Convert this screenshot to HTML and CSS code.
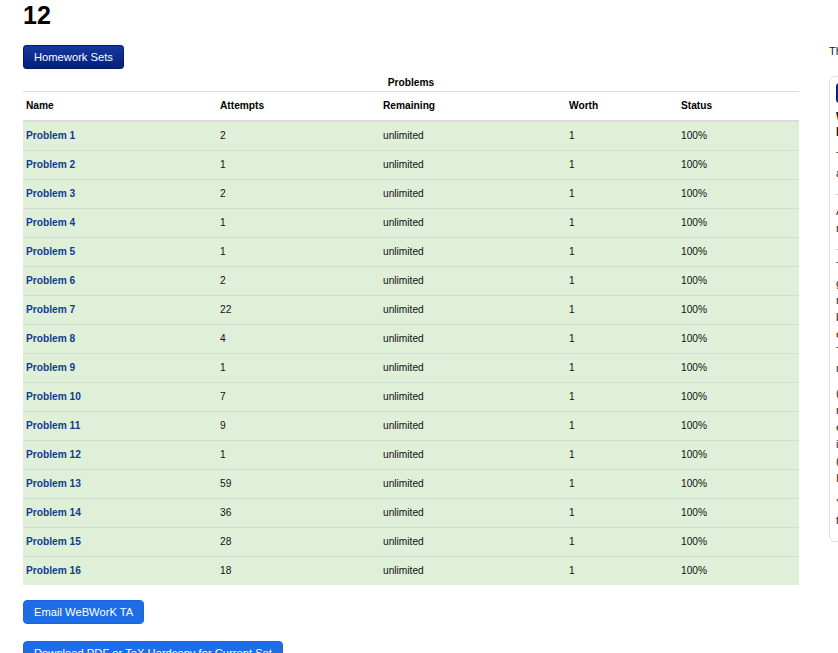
FILE: index.html
```html
<!DOCTYPE html>
<html lang="en">
<head>
<meta charset="utf-8">
<title>Set 12</title>
<link rel="stylesheet" href="styles.css">
</head>
<body>
<div class="page">
  <main class="main">
    <h1 class="set-title">12</h1>
    <div class="btn-row">
      <a class="btn btn-dark" href="#">Homework Sets</a>
    </div>
    <table class="problems">
      <caption>Problems</caption>
      <colgroup>
        <col class="c-name"><col class="c-att"><col class="c-rem"><col class="c-worth"><col class="c-status">
      </colgroup>
      <thead>
        <tr><th>Name</th><th>Attempts</th><th>Remaining</th><th>Worth</th><th>Status</th></tr>
      </thead>
      <tbody>
        <tr><td><a href="#">Problem 1</a></td><td>2</td><td>unlimited</td><td>1</td><td>100%</td></tr>
        <tr><td><a href="#">Problem 2</a></td><td>1</td><td>unlimited</td><td>1</td><td>100%</td></tr>
        <tr><td><a href="#">Problem 3</a></td><td>2</td><td>unlimited</td><td>1</td><td>100%</td></tr>
        <tr><td><a href="#">Problem 4</a></td><td>1</td><td>unlimited</td><td>1</td><td>100%</td></tr>
        <tr><td><a href="#">Problem 5</a></td><td>1</td><td>unlimited</td><td>1</td><td>100%</td></tr>
        <tr><td><a href="#">Problem 6</a></td><td>2</td><td>unlimited</td><td>1</td><td>100%</td></tr>
        <tr><td><a href="#">Problem 7</a></td><td>22</td><td>unlimited</td><td>1</td><td>100%</td></tr>
        <tr><td><a href="#">Problem 8</a></td><td>4</td><td>unlimited</td><td>1</td><td>100%</td></tr>
        <tr><td><a href="#">Problem 9</a></td><td>1</td><td>unlimited</td><td>1</td><td>100%</td></tr>
        <tr><td><a href="#">Problem 10</a></td><td>7</td><td>unlimited</td><td>1</td><td>100%</td></tr>
        <tr><td><a href="#">Problem 11</a></td><td>9</td><td>unlimited</td><td>1</td><td>100%</td></tr>
        <tr><td><a href="#">Problem 12</a></td><td>1</td><td>unlimited</td><td>1</td><td>100%</td></tr>
        <tr><td><a href="#">Problem 13</a></td><td>59</td><td>unlimited</td><td>1</td><td>100%</td></tr>
        <tr><td><a href="#">Problem 14</a></td><td>36</td><td>unlimited</td><td>1</td><td>100%</td></tr>
        <tr><td><a href="#">Problem 15</a></td><td>28</td><td>unlimited</td><td>1</td><td>100%</td></tr>
        <tr><td><a href="#">Problem 16</a></td><td>18</td><td>unlimited</td><td>1</td><td>100%</td></tr>
      </tbody>
    </table>
    <div class="btn-row email-row">
      <a class="btn btn-primary" href="#">Email WeBWorK TA</a>
    </div>
    <div class="btn-row hardcopy-row">
      <a class="btn btn-primary" href="#">Download PDF or TeX Hardcopy for Current Set</a>
    </div>
  </main>
  <aside class="side">
    <p class="side-note">The selected problem set is closed.</p>
    <div class="info-card">
      <div class="card-btn-row"><a class="btn btn-dark btn-sm" href="#">Edit</a></div>
      <h2 class="info-title">WeBWorK Assignment<br>Information</h2>
      <p>This homework set covers the material<br>assigned in the lectures of this week.</p>
      <hr>
      <p>All answers must be entered in the<br>numeric or symbolic form requested.</p>
      <hr>
      <p>To submit, type your answer and press<br>get credit. You may attempt each<br>non-essay problem as many times as<br>before the due date; only the<br>entered answer is recorded.<br>The status column shows your<br>most recent score.</p>
      <p>(Remember to preview your answers:<br>numbers with several digits<br>entered incorrectly are common<br>in many problems.)<br>(Use the hint button when available.)<br>If you are stuck, email your TA.</p>
      <p>You can download a hardcopy of<br>the whole set below.</p>
    </div>
  </aside>
</div>
</body>
</html>
```

FILE: styles.css
```css
html {
  scrollbar-width: none;
}

body {
  margin: 0;
  font-family: "Liberation Sans", Arial, Helvetica, sans-serif;
  font-size: 11.2px;
  line-height: 17px;
  color: #212529;
  background: #fff;
  overflow-x: hidden;
}

.page {
  display: flex;
  gap: 30px;
  padding: 0 23px;
  width: max-content;
}

.main {
  width: 776px;
  flex-shrink: 0;
}

.set-title {
  font-size: 25px;
  line-height: 30px;
  font-weight: 700;
  margin: 0 0 15px;
  color: #000;
}

.btn-row {
  display: flex;
}

.btn {
  display: inline-block;
  box-sizing: border-box;
  height: 24px;
  padding: 3px 10px;
  line-height: 16px;
  font-size: 11.2px;
  color: #fff;
  text-decoration: none;
  border: 1px solid transparent;
  border-radius: 3px;
  white-space: nowrap;
}

.btn-dark {
  background: linear-gradient(#16389c, #03217c);
  border-color: #021b6a;
}

.btn-primary {
  background: #1d6ee6;
  border-color: #1a66d8;
  border-radius: 4px;
}

.btn-sm {
  height: 20px;
  padding: 1px 8px;
  font-size: 10px;
}

.problems {
  width: 100%;
  border-collapse: collapse;
  table-layout: fixed;
  font-size: 10.2px;
  line-height: 14px;
}

.problems caption {
  caption-side: top;
  padding: 7px 0 1px;
  font-weight: 700;
  color: #000;
  text-align: center;
}

.c-name { width: 194px; }
.c-att { width: 163px; }
.c-rem { width: 186px; }
.c-worth { width: 112px; }
.c-status { width: 121px; }

.problems th {
  text-align: left;
  font-weight: 700;
  color: #000;
  padding: 7px 3px;
  border-top: 1px solid #dcdcdc;
  border-bottom: 2px solid #dcdcdc;
}

.problems td {
  padding: 7px 3px;
  border-top: 1px solid #d3ddd0;
  background: #dfefd8;
  color: #111;
}

.problems td a {
  color: #0f3d8e;
  font-weight: 700;
  text-decoration: none;
}

.email-row {
  margin-top: 15px;
}

.hardcopy-row {
  margin-top: 17px;
}

.side {
  width: 240px;
  flex-shrink: 0;
  padding-top: 43px;
}

.side-note {
  margin: 0 0 16px;
}

.info-card {
  border: 1px solid #e0e0e0;
  border-radius: 6px;
  padding: 6px 6px 4px;
}

.card-btn-row {
  display: flex;
  margin-bottom: 7px;
}

.info-title {
  font-size: 12px;
  line-height: 15px;
  font-weight: 700;
  margin: 0 0 8px;
  color: #111;
}

.info-card p {
  margin: 0 0 8px;
}

.info-card hr {
  border: 0;
  border-top: 1px solid #c8c8c8;
  margin: 12px 0 8px;
}
```
